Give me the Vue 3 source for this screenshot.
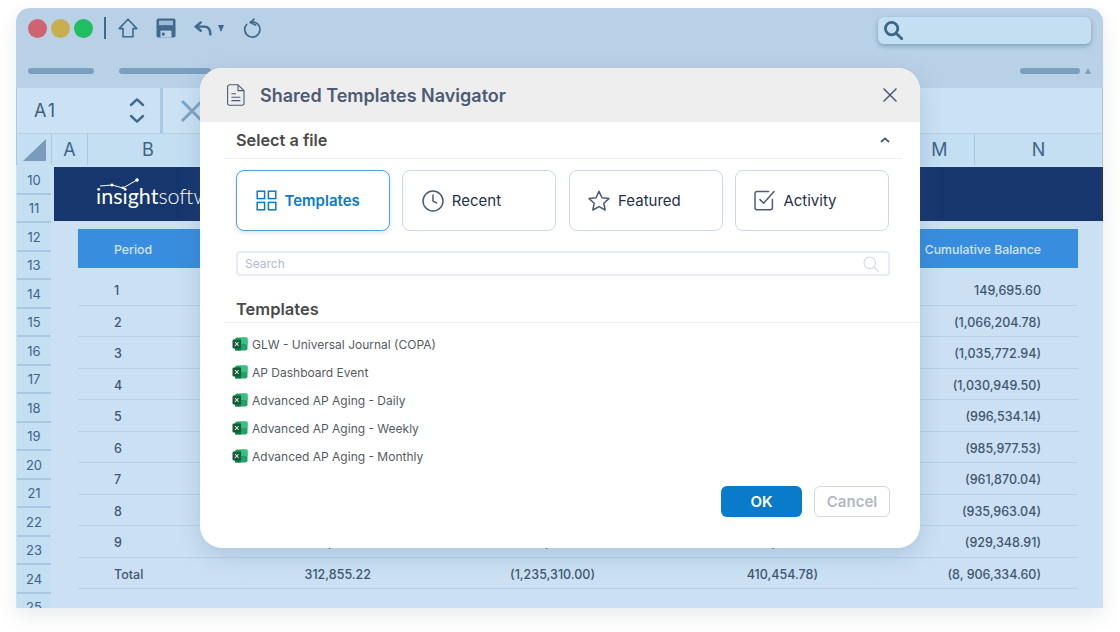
<script setup>
const rowNums = [10, 11, 12, 13, 14, 15, 16, 17, 18, 19, 20, 21, 22, 23, 24, 25]
const rows = [
  { p: '1', v: ['', '', '', '149,695.60'] },
  { p: '2', v: ['', '', '', '(1,066,204.78)'] },
  { p: '3', v: ['', '', '', '(1,035,772.94)'] },
  { p: '4', v: ['', '', '', '(1,030,949.50)'] },
  { p: '5', v: ['', '', '', '(996,534.14)'] },
  { p: '6', v: ['', '', '', '(985,977.53)'] },
  { p: '7', v: ['', '', '', '(961,870.04)'] },
  { p: '8', v: ['', '', '', '(935,963.04)'] },
  { p: '9', v: ['34,761.69', '(137,256.78)', '45,606.09', '(929,348.91)'] },
  { p: 'Total', v: ['312,855.22', '(1,235,310.00)', '410,454.78)', '(8, 906,334.60)'] }
]
const files = [
  'GLW - Universal Journal (COPA)',
  'AP Dashboard Event',
  'Advanced AP Aging - Daily',
  'Advanced AP Aging - Weekly',
  'Advanced AP Aging - Monthly'
]
</script>

<template>
  <div class="page">
    <div class="window">
      <header class="toolbar">
        <div class="tool-top">
          <div class="tools">
            <span class="light red"></span>
            <span class="light yellow"></span>
            <span class="light green"></span>
            <span class="divider"></span>
            <svg class="ico home" width="20" height="20" viewBox="0 0 20 20" fill="none" stroke="#3f6a8e" stroke-width="1.6" stroke-linejoin="round">
              <path d="M10 1.2 1.2 10.6H5V18.8H15V10.6H18.8Z" />
            </svg>
            <svg class="ico save" width="20" height="20" viewBox="0 0 20 20">
              <rect x="0.5" y="0.5" width="19" height="19" rx="2" fill="#3f6a8e" />
              <rect x="3" y="2.6" width="14" height="4.6" fill="#9dbbd5" />
              <rect x="4.5" y="12.6" width="11" height="6.9" fill="#b9d1e6" />
              <rect x="6" y="14.6" width="2.6" height="3" fill="#3f6a8e" />
            </svg>
            <svg class="ico undo" width="18" height="15" viewBox="0 0 18 15" fill="none" stroke="#3f6a8e" stroke-width="2.4" stroke-linecap="round" stroke-linejoin="round">
              <path d="M6.8 1.4 1.6 5.6 6.8 9.8M2 5.6H10.4C14 5.6 16.4 8.2 16.4 13.4" />
            </svg>
            <span class="caret"></span>
            <svg class="ico refresh" width="18" height="20" viewBox="0 0 18 20" fill="none" stroke="#3f6a8e" stroke-width="1.7" stroke-linecap="round" stroke-linejoin="round">
              <path d="M3.6 6.5A7.6 7.6 0 1 0 7.5 4.1" />
              <path d="M11 1.2 7.2 4.6 12.5 7" />
            </svg>
          </div>
          <div class="search-box">
            <svg width="21" height="21" viewBox="0 0 21 21" fill="none" stroke="#3d6788" stroke-width="2.8" stroke-linecap="round">
              <circle cx="8.6" cy="8.6" r="6.2" />
              <path d="M13.4 13.4 18.8 18.8" />
            </svg>
          </div>
        </div>
        <div class="tool-pills">
          <span class="pill p1"></span>
          <span class="pill p2"></span>
          <span class="pill p3"></span>
          <span class="tri"></span>
        </div>
      </header>

      <div class="formula">
        <div class="namebox">
          <span class="cellref">A1</span>
          <svg width="16" height="27" viewBox="0 0 16 27" fill="none" stroke="#3f6a8e" stroke-width="2.4" stroke-linecap="round" stroke-linejoin="round">
            <path d="M2 8 8 2.4 14 8M2 19 8 24.6 14 19" />
          </svg>
        </div>
        <div class="fx">
          <svg width="24" height="24" viewBox="0 0 24 24" fill="none" stroke="#7fa3c4" stroke-width="3">
            <path d="M2 2 22 22M22 2 2 22" />
          </svg>
        </div>
      </div>

      <div class="colhead">
        <div class="corner"><span class="corner-tri"></span></div>
        <div class="col a">A</div>
        <div class="col b">B</div>
        <div class="col fill"></div>
        <div class="col m">M</div>
        <div class="col n">N</div>
      </div>

      <div class="sheet">
        <div class="rownums">
          <div v-for="n in rowNums" :key="n" class="rownum">{{ n }}</div>
        </div>
        <div class="grid">
          <div class="banner">
            <div class="logo">
              <svg class="logo-line" width="42" height="11" viewBox="0 0 42 11" fill="none" stroke="#ffffff" stroke-width="1">
                <path d="M1 8 13 7 24 10 38 2" />
                <circle cx="13" cy="7" r="1.1" fill="#fff" />
                <circle cx="24" cy="10" r="1.1" fill="#fff" />
                <circle cx="38" cy="2" r="1.3" fill="#fff" />
              </svg>
              <span class="logo-text"><span class="logo-strong">insight</span>software</span>
            </div>
          </div>
          <div class="table">
            <div class="thead">
              <span class="period">Period</span>
              <span></span><span></span><span></span>
              <span class="num">Cumulative Balance</span>
            </div>
            <div class="tbody">
              <div v-for="r in rows" :key="r.p" class="trow">
                <span class="period">{{ r.p }}</span>
                <span v-for="(v, i) in r.v" :key="i" class="num">{{ v }}</span>
              </div>
            </div>
          </div>
        </div>
      </div>

      <section class="modal">
        <div class="m-head">
          <svg width="18" height="22" viewBox="0 0 18 22" fill="none" stroke="#4c5b73" stroke-width="1.1" stroke-linejoin="round">
            <path d="M2.4.8H11L17 6.6V19.4A1.8 1.8 0 0 1 15.2 21.2H2.4A1.8 1.8 0 0 1 .6 19.4V2.6A1.8 1.8 0 0 1 2.4.8Z" />
            <path d="M11 .8V6.6H17M4.4 9.8H9M4.4 13.2H13.4M4.4 16.6H13.4" />
          </svg>
          <h1 class="m-title">Shared Templates Navigator</h1>
          <svg class="m-close" width="14" height="14" viewBox="0 0 14 14" fill="none" stroke="#4a5a70" stroke-width="1.5">
            <path d="M.5 .5 13.5 13.5M13.5 .5 .5 13.5" />
          </svg>
        </div>

        <div class="m-section">
          <span>Select a file</span>
          <svg width="10" height="6" viewBox="0 0 10 6" fill="none" stroke="#4a5a70" stroke-width="1.8">
            <path d="M1 5 5 1.4 9 5" />
          </svg>
        </div>

        <div class="tabs">
          <button class="tab active">
            <svg width="21" height="21" viewBox="0 0 21 21" fill="none" stroke="#0a7acb" stroke-width="1.5">
              <rect x="1.2" y="1.2" width="7.4" height="7.4" />
              <rect x="12.4" y="1.2" width="7.4" height="7.4" />
              <rect x="1.2" y="12.4" width="7.4" height="7.4" />
              <rect x="12.4" y="12.4" width="7.4" height="7.4" />
            </svg>
            Templates
          </button>
          <button class="tab">
            <svg width="22" height="22" viewBox="0 0 22 22" fill="none" stroke="#4c5b73" stroke-width="1.5" stroke-linecap="round" stroke-linejoin="round">
              <circle cx="11" cy="11" r="10" />
              <path d="M11 5V11.2L14.6 13" />
            </svg>
            Recent
          </button>
          <button class="tab">
            <svg width="22" height="21" viewBox="0 0 22 21" fill="none" stroke="#4c5b73" stroke-width="1.5" stroke-linejoin="round">
              <path d="M11 1.4 14 7.7 20.9 8.6 15.8 13.3 17.2 20 11 16.6 4.8 20 6.2 13.3 1.1 8.6 8 7.7Z" />
            </svg>
            Featured
          </button>
          <button class="tab">
            <svg width="21" height="21" viewBox="0 0 21 21" fill="none" stroke="#4c5b73" stroke-width="1.5" stroke-linecap="round" stroke-linejoin="round">
              <path d="M18.4 9.5V17.8A2 2 0 0 1 16.4 19.8H3A2 2 0 0 1 1 17.8V3.4A2 2 0 0 1 3 1.4H14.6" />
              <path d="M6 9.6 9.6 13.2 20 1.6" />
            </svg>
            Activity
          </button>
        </div>

        <div class="m-search">
          <span>Search</span>
          <svg width="16" height="16" viewBox="0 0 16 16" fill="none" stroke="#cfdce8" stroke-width="1.2" stroke-linecap="round">
            <circle cx="6.8" cy="6.8" r="5.8" />
            <path d="M11 11 15.4 15.4" />
          </svg>
        </div>

        <h2 class="m-sub">Templates</h2>

        <ul class="files">
          <li v-for="f in files" :key="f">
            <svg width="16" height="14" viewBox="0 0 16 14">
              <rect x="3" y="0.5" width="12.5" height="13" rx="2" fill="#21a366" />
              <rect x="9" y="0.5" width="6.5" height="6.5" fill="#33c481" />
              <rect x="3" y="7" width="6" height="6.5" fill="#107c41" />
              <rect x="0.5" y="2.6" width="8.6" height="8.8" rx="1.2" fill="#185c37" />
              <path d="M3 5 6.6 9M6.6 5 3 9" stroke="#fff" stroke-width="1" fill="none" />
            </svg>
            <span>{{ f }}</span>
          </li>
        </ul>

        <div class="m-actions">
          <button class="btn ok">OK</button>
          <button class="btn cancel">Cancel</button>
        </div>
      </section>
    </div>
  </div>
</template>

<style scoped>
.page {
  box-sizing: border-box;
  width: 1120px;
  height: 632px;
  padding: 8px 17px 24px 16px;
  background: #fff;
  font-family: Inter, "Liberation Sans", sans-serif;
}
.window {
  position: relative;
  width: 1087px;
  height: 600px;
  overflow: hidden;
  border-radius: 14px 14px 0 0;
  background: #b9d1e6;
  box-shadow: 0 8px 20px rgba(40, 60, 80, 0.1);
}
.toolbar {
  box-sizing: border-box;
  height: 80px;
  padding: 9px 12px 0;
}
.tool-top {
  display: flex;
  justify-content: space-between;
  align-items: flex-start;
}
.tools {
  display: flex;
  align-items: center;
  height: 20px;
  margin-top: 1px;
}
.light {
  width: 19px;
  height: 19px;
  margin-right: 4px;
  border-radius: 50%;
}
.red { background: #cf6470; }
.yellow { background: #c9ae4f; }
.green { background: #1fbe60; }
.divider {
  width: 2px;
  height: 22px;
  margin-left: 7px;
  background: #3f6a8e;
}
.ico { display: block; flex: none; }
.home { margin-left: 12px; }
.save { margin-left: 18px; }
.undo { margin-left: 18px; }
.caret {
  width: 0;
  height: 0;
  margin-left: 6px;
  border-left: 3.5px solid transparent;
  border-right: 3.5px solid transparent;
  border-top: 7px solid #3f6a8e;
}
.refresh { margin-left: 19px; }
.search-box {
  display: flex;
  align-items: center;
  box-sizing: border-box;
  width: 213px;
  height: 27px;
  padding-left: 5px;
  border-radius: 6px;
  background: #c5dff2;
  box-shadow: 0 2px 5px rgba(50, 90, 130, 0.45);
}
.tool-pills {
  display: flex;
  align-items: center;
  margin-top: 24px;
}
.pill {
  height: 6px;
  border-radius: 3px;
  background: #7a9fc1;
}
.p1 { width: 66px; }
.p2 { width: 92px; margin-left: 25px; }
.p3 { width: 60px; margin-left: auto; }
.tri {
  width: 0;
  height: 0;
  margin-left: 5px;
  border-left: 3.5px solid transparent;
  border-right: 3.5px solid transparent;
  border-bottom: 6px solid #7a9fc1;
}
.formula {
  display: flex;
  gap: 3px;
  height: 45px;
  padding: 0 1px;
  background: #a9c8e3;
}
.namebox {
  display: flex;
  align-items: center;
  justify-content: space-between;
  box-sizing: border-box;
  width: 143px;
  padding: 0 15px 0 17px;
  background: #cbe2f4;
}
.cellref {
  color: #3c5f80;
  font-size: 18px;
  font-weight: 400;
  letter-spacing: 2px;
}
.fx {
  display: flex;
  align-items: center;
  flex: 1;
  padding-left: 17px;
  background: #cbe2f4;
}
.colhead {
  display: flex;
  gap: 1px;
  height: 31px;
  margin-top: 1px;
  padding: 0 1px;
  background: #a9c8e3;
}
.corner {
  position: relative;
  width: 34px;
  background: #c4def2;
}
.corner-tri {
  position: absolute;
  left: 6px;
  top: 5px;
  width: 23px;
  height: 22px;
  background: #7b9bbd;
  clip-path: polygon(100% 0, 100% 100%, 0 100%);
}
.col {
  display: flex;
  align-items: center;
  justify-content: center;
  background: #c4def2;
  color: #3f6488;
  font-size: 18px;
  font-weight: 400;
}
.a { width: 35px; }
.b { width: 120px; }
.fill { flex: 1; }
.m { width: 69px; }
.n { width: 127px; }
.sheet {
  display: flex;
  height: 500px;
  padding-top: 1px;
  background: #cbe1f3;
  border-bottom-right-radius: 14px;
  border-bottom-left-radius: 14px;
}
.rownums {
  flex: none;
  width: 34px;
  margin-left: 1px;
  margin-right: 3px;
}
.rownum {
  display: flex;
  align-items: center;
  justify-content: center;
  box-sizing: border-box;
  height: 28.5px;
  padding-top: 1px;
  background: #c4def2;
  border-bottom: 2px solid #a9c8e3;
  color: #3f6488;
  font-size: 13px;
}
.grid {
  flex: 1;
  min-width: 0;
  padding-top: 1px;
}
.banner {
  display: flex;
  align-items: center;
  height: 54px;
  padding-left: 42px;
  background: #17366d;
}
.logo {
  display: flex;
  flex-direction: column;
  color: #fff;
  white-space: nowrap;
}
.logo-line {
  display: block;
  margin-left: 3px;
  margin-bottom: -7px;
}
.logo-text {
  font-family: Lato, "Open Sans", sans-serif;
  font-size: 21.5px;
  font-weight: 300;
  line-height: 28px;
}
.logo-strong { font-weight: 400; }
.table {
  width: 1000px;
  margin: 8px 0 0 24px;
  color: #3f566f;
  font-size: 12.5px;
  font-weight: 500;
}
.thead,
.trow {
  display: grid;
  grid-template-columns: 122px 171px 224px 223px 223px;
  align-items: center;
}
.thead {
  box-sizing: border-box;
  height: 39px;
  padding-top: 1px;
  background: #398dde;
  color: #cfe6f8;
  font-size: 12.3px;
}
.period { padding-left: 36px; }
.num {
  text-align: right;
  white-space: nowrap;
}
.tbody { padding-top: 6px; }
.trow {
  box-sizing: border-box;
  height: 31.5px;
  padding-top: 3px;
  border-bottom: 1px solid #b7d2e8;
}
.modal {
  position: absolute;
  left: 184px;
  top: 60px;
  display: flex;
  flex-direction: column;
  box-sizing: border-box;
  width: 720px;
  height: 480px;
  overflow: hidden;
  border-radius: 22px;
  background: #fff;
  box-shadow: 0 8px 24px rgba(50, 90, 130, 0.2);
}
.m-head {
  display: flex;
  align-items: center;
  flex: none;
  height: 54px;
  padding: 0 23px 0 27px;
  background: #eeeeee;
}
.m-title {
  flex: 1;
  margin: 0 0 0 15px;
  color: #4c5b73;
  font-size: 18px;
  font-weight: 600;
}
.m-section {
  display: flex;
  align-items: center;
  justify-content: space-between;
  flex: none;
  height: 37px;
  margin: 0 18px 0 24px;
  padding: 0 12px 0 12px;
  border-bottom: 1px solid #eeeeee;
  box-sizing: border-box;
  color: #4a4a4a;
  font-size: 16.3px;
  font-weight: 600;
}
.tabs {
  display: grid;
  grid-template-columns: repeat(4, 154px);
  column-gap: 12.3px;
  margin: 11px 0 0 36px;
}
.tab {
  display: flex;
  align-items: center;
  gap: 8px;
  box-sizing: border-box;
  height: 61px;
  padding: 0 0 0 18.5px;
  border: 1px solid #cdd9e8;
  border-radius: 8px;
  background: #fff;
  color: #1f2f4d;
  font-family: inherit;
  font-size: 15px;
}
.tab.active {
  border-color: #4da3e0;
  color: #0a7acb;
  font-weight: 600;
  box-shadow: 0 2px 5px rgba(40, 60, 80, 0.14);
}
.m-search {
  display: flex;
  align-items: center;
  justify-content: space-between;
  box-sizing: border-box;
  width: 654px;
  height: 25px;
  margin: 20px 0 0 36px;
  padding: 0 9px 0 7px;
  border: 2px solid #e7edf4;
  border-radius: 4px;
  color: #b0bccf;
  font-size: 12px;
}
.m-sub {
  box-sizing: border-box;
  height: 47px;
  margin: 0 0 0 24px;
  padding: 23px 0 0 12px;
  border-bottom: 1px solid #eeeeee;
  color: #4a4a4a;
  font-size: 16.5px;
  font-weight: 600;
  line-height: 21px;
}
.files {
  margin: 7px 0 0 32px;
  padding: 0;
  list-style: none;
}
.files li {
  display: flex;
  align-items: center;
  gap: 4px;
  height: 28px;
  color: #555b63;
  font-size: 12px;
}
.m-actions {
  display: flex;
  justify-content: flex-end;
  gap: 12px;
  margin: 16px 30px 0 0;
}
.btn {
  box-sizing: border-box;
  height: 31px;
  border-radius: 6px;
  font-family: inherit;
  font-size: 15px;
  font-weight: 600;
}
.ok {
  width: 81px;
  border: 0;
  background: #0a7acb;
  color: #fff;
}
.cancel {
  width: 76px;
  border: 1px solid #d5d8de;
  background: #fff;
  color: #b3b8c5;
}
</style>
